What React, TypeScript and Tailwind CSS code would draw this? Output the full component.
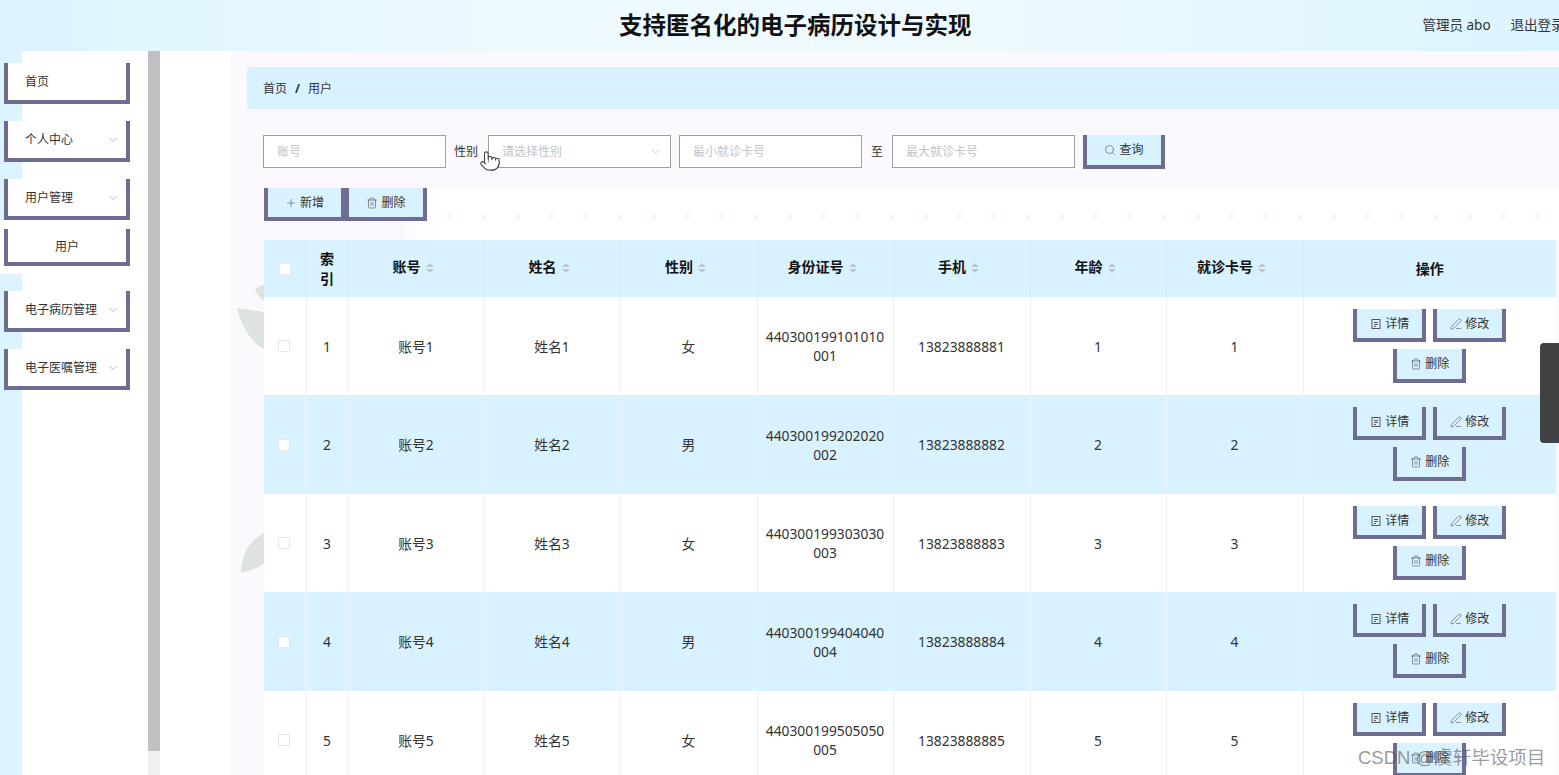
import { ChevronDown, PenLine, Plus, Pointer, Search, Trash2 } from 'lucide-react'
import type { ReactNode } from 'react'

const font = { fontFamily: '"Noto Sans", "Noto Sans CJK SC", sans-serif' }

const users = [
  { id: 1, gender: '女', card: '440300199101010001' },
  { id: 2, gender: '男', card: '440300199202020002' },
  { id: 3, gender: '女', card: '440300199303030003' },
  { id: 4, gender: '男', card: '440300199404040004' },
  { id: 5, gender: '女', card: '440300199505050005' },
]

const columns = ['账号', '姓名', '性别', '身份证号', '手机', '年龄', '就诊卡号']

function MenuItem({ label, arrow, className }: { label: string; arrow?: boolean; className?: string }) {
  return (
    <div
      className={`flex h-[41px] w-[126px] items-center border-x-4 border-b-4 border-[#6f6c93] bg-white pl-[17px] pr-[7px] text-[12px] text-[#333] ${className ?? ''}`}
    >
      <span className="pt-[1px]">{label}</span>
      {arrow && <ChevronDown className="ml-auto text-[#808388]" size={12} strokeWidth={1.2} />}
    </div>
  )
}

function Sidebar() {
  return (
    <div className="flex w-[148px] shrink-0 flex-col bg-[linear-gradient(to_right,#dcf4ff_22px,#ffffff_22px)] pl-[4px] pt-[12px]">
      <MenuItem label="首页" />
      <MenuItem label="个人中心" arrow className="mt-[17px]" />
      <MenuItem label="用户管理" arrow className="mt-[17px]" />
      <div className="-ml-[4px] bg-white pb-[8px] pl-[4px]">
        <div className="mt-[9px] flex h-[37px] w-[126px] items-center justify-center border-x-4 border-b-4 border-[#6f6c93] bg-white pt-[3px] text-[12px] text-[#333]">
          用户
        </div>
      </div>
      <MenuItem label="电子病历管理" arrow className="mt-[17px]" />
      <MenuItem label="电子医嘱管理" arrow className="mt-[17px]" />
    </div>
  )
}

function ActionButton({ children, className }: { children: ReactNode; className?: string }) {
  return (
    <button
      className={`flex items-center justify-center gap-[3px] border-x-4 border-b-4 border-[#6f6c93] bg-[#d9f2ff] text-[12px] text-[#333] ${className ?? ''}`}
    >
      {children}
    </button>
  )
}

function DetailIcon() {
  return (
    <svg width="12" height="12" viewBox="0 0 12 12" fill="none" stroke="#555" strokeWidth="1">
      <rect x="2" y="1.5" width="8" height="9" />
      <path d="M4 4.5h4M4 6.5h4M4 8.5h2" />
    </svg>
  )
}

function RowActions() {
  return (
    <div className="flex flex-col items-center gap-[7px]">
      <div className="flex gap-[7px]">
        <ActionButton className="h-[33px] w-[73px]">
          <DetailIcon />
          详情
        </ActionButton>
        <ActionButton className="h-[33px] w-[73px]">
          <PenLine size={12} strokeWidth={1} />
          修改
        </ActionButton>
      </div>
      <ActionButton className="h-[34px] w-[73px]">
        <Trash2 size={12} strokeWidth={1} />
        删除
      </ActionButton>
    </div>
  )
}

function SortCaret() {
  return (
    <svg className="ml-[5px] inline-block" width="8" height="12" viewBox="0 0 8 12" fill="#c0c4cc">
      <path d="M4 1 8 5H0zM4 11 0 7h8z" />
    </svg>
  )
}

function Checkbox({ className }: { className?: string }) {
  return <span className={`block h-[12px] w-[12px] border border-[#e4e7ed] bg-white ${className ?? ''}`} />
}

function TextInput({ placeholder, width }: { placeholder: string; width: string }) {
  return (
    <div className={`flex h-[33px] items-center border border-[#a0a0a0] bg-white pl-[13px] text-[12px] text-[#c0c4cc] ${width}`}>
      {placeholder}
    </div>
  )
}

function Table() {
  return (
    <table className="w-[1292px] table-fixed border-collapse text-[13.8px] text-[#333]">
      <colgroup>
        <col className="w-[42px]" />
        <col className="w-[42px]" />
        <col className="w-[136px]" />
        <col className="w-[136px]" />
        <col className="w-[137px]" />
        <col className="w-[136px]" />
        <col className="w-[137px]" />
        <col className="w-[136px]" />
        <col className="w-[137px]" />
        <col className="w-[253px]" />
      </colgroup>
      <thead>
        <tr className="h-[57px] bg-[#d9f2ff] text-[14px] font-bold text-[#111]">
          <th className="border-r border-[#d3ebf7] pl-[15px]">
            <Checkbox />
          </th>
          <th className="border-r border-[#d3ebf7] px-[12px] pt-[1px] leading-[20px]">索引</th>
          {columns.map((name) => (
            <th key={name} className="border-r border-[#d3ebf7] pb-[4px] pr-[6px] font-bold">
              {name}
              <SortCaret />
            </th>
          ))}
          <th className="font-bold">操作</th>
        </tr>
      </thead>
      <tbody>
        {users.map((user) => (
          <tr
            key={user.id}
            className={`text-center ${user.id % 2 === 0 ? 'h-[99px] bg-[#d9f2ff]' : 'h-[98px] bg-white'}`}
          >
            <td className="border-r border-[#eef0f3] pl-[14px]">
              <Checkbox />
            </td>
            <td className="border-r border-[#eef0f3] pt-[2px]">{user.id}</td>
            <td className="border-r border-[#eef0f3] pt-[2px]">账号{user.id}</td>
            <td className="border-r border-[#eef0f3] pt-[2px]">姓名{user.id}</td>
            <td className="border-r border-[#eef0f3] pt-[2px]">{user.gender}</td>
            <td className="border-r border-[#eef0f3] px-[6px] leading-[19px] break-all">{user.card}</td>
            <td className="border-r border-[#eef0f3] pt-[2px]">1382388888{user.id}</td>
            <td className="border-r border-[#eef0f3] pt-[2px]">{user.id}</td>
            <td className="border-r border-[#eef0f3] pt-[2px]">{user.id}</td>
            <td className="align-top pt-[12px]">
              <RowActions />
            </td>
          </tr>
        ))}
      </tbody>
    </table>
  )
}

export default function App() {
  return (
    <div className="relative h-[775px] w-[1559px] overflow-hidden bg-white" style={font}>
      <header className="flex h-[51px] items-center whitespace-nowrap bg-[linear-gradient(to_right,#dcf4ff,#eefaff_35%,#eefaff_60%,#dcf4ff)] pl-[619px]">
        <h1 className="pt-[1px] text-[23.5px] font-bold text-[#111]">支持匿名化的电子病历设计与实现</h1>
        <span className="ml-[451px] text-[13.5px] text-[#333]">管理员 abo</span>
        <span className="ml-[20px] text-[13.5px] text-[#333]">退出登录</span>
      </header>

      <div className="flex h-[724px]">
        <Sidebar />
        <div className="w-[12px] shrink-0 bg-[#f1f1f1]">
          <div className="h-[700px] bg-[#c1bfc4]" />
        </div>
        <div className="w-[70px] shrink-0 bg-white" />

        <main className="relative min-w-0 flex-1 bg-[#fbf9fd] pl-[17px] pt-[16px]">
          {/* leaves and dots of the page background */}
          <svg className="absolute left-[6px] top-[230px]" width="28" height="310" viewBox="0 0 28 310" fill="#dde4de">
            <path d="M19 8 28 3V20C24 18 21 14 19 8Z" />
            <path d="M1 27 28 31V68C16 62 6 48 1 27Z" />
            <path d="M28 252V282C20 288 12 291 5 291 5 276 12 260 28 252Z" />
          </svg>
          <div className="absolute left-[170px] right-0 top-[137px] h-[52px] bg-[linear-gradient(to_right,#fbf9fd00,#ffffff_40px)]" />
          <div className="absolute left-[217px] right-0 top-[163px] flex gap-[29px]">
            {Array.from({ length: 33 }, (_, i) => (
              <span key={i} className="h-[5px] w-[5px] shrink-0 bg-[#f7f7ee]" />
            ))}
          </div>

          <div className="relative">
            <div className="flex h-[42px] items-center bg-[#d9f2ff] pl-[16px] pt-[1px] text-[12px] text-[#303133]">
              首页
              <span className="mx-[8px] font-bold">/</span>
              用户
            </div>

            <div className="flex items-start pl-[16px] pt-[26px]">
              <TextInput placeholder="账号" width="w-[183px]" />
              <span className="ml-[8px] w-[34px] self-center text-[12px] text-[#333]">性别</span>
              <div className="flex h-[33px] w-[183px] items-center border border-[#a0a0a0] bg-white pl-[13px] pr-[8px] text-[12px] text-[#c0c4cc]">
                请选择性别
                <ChevronDown className="ml-auto text-[#9a9ea6]" size={13} strokeWidth={1} />
              </div>
              <TextInput placeholder="最小就诊卡号" width="ml-[8px] w-[183px]" />
              <span className="w-[30px] self-center pl-[9px] text-[12px] text-[#333]">至</span>
              <TextInput placeholder="最大就诊卡号" width="w-[183px]" />
              <ActionButton className="ml-[8px] h-[34px] w-[82px]">
                <Search size={12} strokeWidth={1} />
                查询
              </ActionButton>
            </div>

            <div className="flex pl-[17px] pt-[19px]">
              <ActionButton className="h-[33px] w-[81px]">
                <Plus size={12} strokeWidth={1} />
                新增
              </ActionButton>
              <ActionButton className="h-[33px] w-[82px]">
                <Trash2 size={12} strokeWidth={1} />
                删除
              </ActionButton>
            </div>

            <div className="pl-[17px] pt-[19px]">
              <Table />
            </div>
          </div>
        </main>
      </div>

      {/* things lying over the page: mouse cursor, side tab, video watermark */}
      <Pointer className="absolute left-[479px] top-[150px] fill-white text-[#444]" size={22} strokeWidth={1.2} />
      <div className="absolute right-0 top-[343px] h-[100px] w-[19px] rounded-l-[4px] bg-[#3f4142]" />
      <span
        className="absolute left-[1358px] top-[744px] text-[18.5px] text-[#555]/60"
        style={{ fontFamily: '"Liberation Sans", "Noto Sans CJK SC", sans-serif' }}
      >
        CSDN @虞轩毕设项目
      </span>
    </div>
  )
}
